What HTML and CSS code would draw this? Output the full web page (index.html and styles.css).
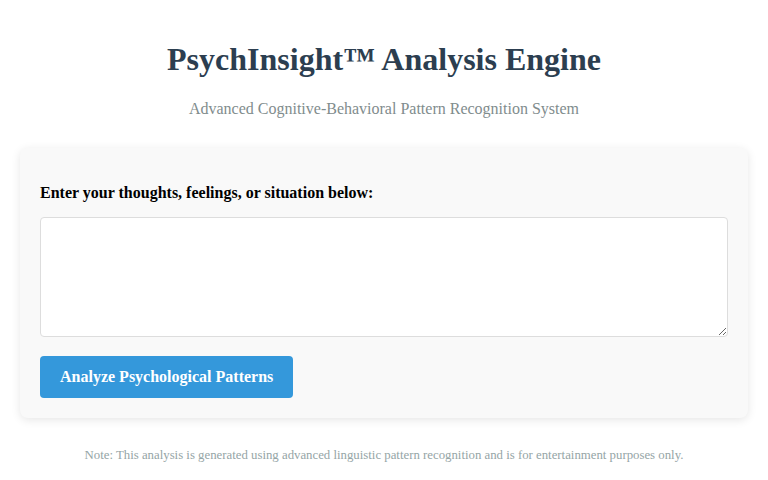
FILE: index.html
```html
<!DOCTYPE html>
<html>
<head>
<meta charset="utf-8">
<link rel="stylesheet" href="styles.css">
</head>
<body>
<div class="page">
  <header class="header">
    <h1 class="title">PsychInsight™ Analysis Engine</h1>
    <p class="subtitle">Advanced Cognitive-Behavioral Pattern Recognition System</p>
  </header>
  <section class="card">
    <label class="label" for="entry">Enter your thoughts, feelings, or situation below:</label>
    <textarea id="entry" class="entry"></textarea>
    <button class="btn">Analyze Psychological Patterns</button>
  </section>
  <p class="note">Note: This analysis is generated using advanced linguistic pattern recognition and is for entertainment purposes only.</p>
</div>
</body>
</html>
```

FILE: styles.css
```css
html, body {
  margin: 0;
  padding: 0;
  background: #ffffff;
}
body {
  font-family: "Liberation Serif", "Times New Roman", serif;
}
.page {
  padding: 21px 20px 20px;
}
.header {
  text-align: center;
  padding-top: 20px;
  margin-bottom: 30px;
}
.title {
  margin: 0 0 22px;
  font-size: 32px;
  line-height: 37px;
  font-weight: bold;
  color: #2c3e50;
}
.subtitle {
  margin: 0;
  font-size: 16px;
  line-height: 18px;
  color: #7f8c8d;
}
.card {
  background: #f9f9f9;
  border-radius: 8px;
  box-shadow: 0 2px 10px rgba(0, 0, 0, 0.1);
  padding: 36px 20px 20px;
  display: flex;
  flex-direction: column;
  align-items: flex-start;
}
.label {
  display: block;
  font-size: 16px;
  line-height: 18px;
  font-weight: bold;
  color: #000;
  margin-bottom: 15px;
}
.entry {
  box-sizing: border-box;
  width: 100%;
  height: 120px;
  border: 1px solid #ddd;
  border-radius: 4px;
  background: #fff;
  margin: 0 0 19px;
  padding: 10px;
  font-family: "Liberation Serif", serif;
  font-size: 16px;
}
.btn {
  background: #3498db;
  color: #fff;
  border: none;
  border-radius: 4px;
  padding: 12px 20px;
  font-family: "Liberation Serif", "Times New Roman", serif;
  font-size: 16px;
  line-height: 18px;
  font-weight: bold;
  cursor: pointer;
}
.note {
  margin: 30px 0 0;
  text-align: center;
  font-size: 12.8px;
  line-height: 15px;
  color: #95a5a6;
}
```
